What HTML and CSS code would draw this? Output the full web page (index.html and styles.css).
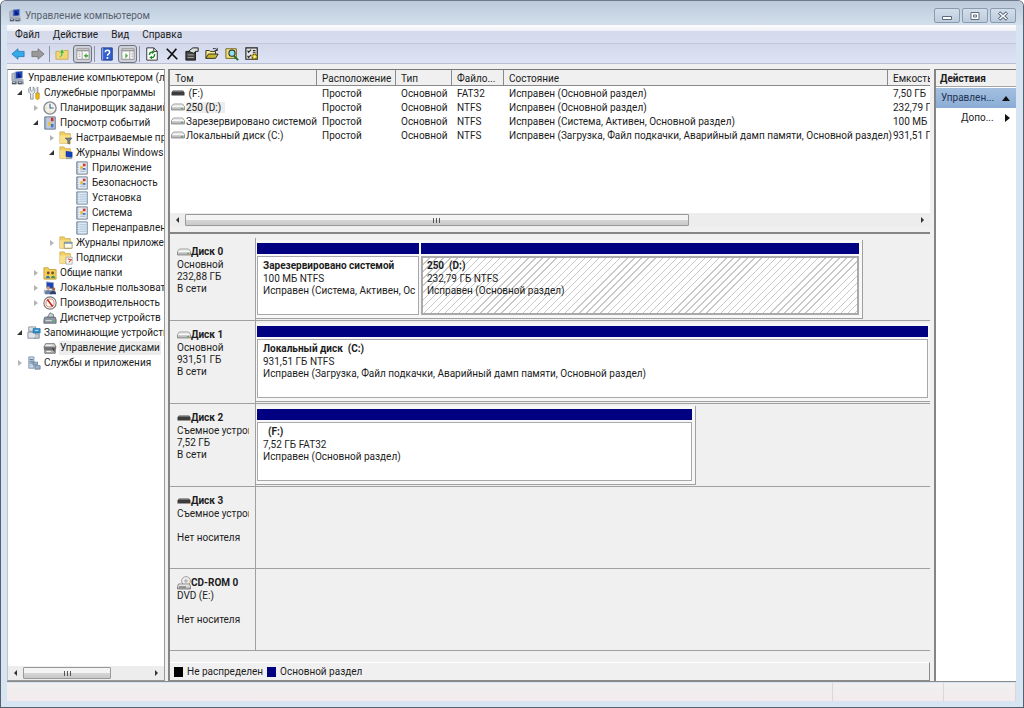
FILE: index.html
```html
<!DOCTYPE html>
<html lang="ru">
<head>
  <meta charset="UTF-8">
  <meta name="viewport" content="width=device-width, initial-scale=1.0">
  <title>Управление компьютером</title>
  <link rel="stylesheet" href="styles.css">
</head>
<body>

  <!-- Icons -->
  <svg class="sprite" aria-hidden="true">
    <linearGradient id="g-disk" x1="0" y1="0" x2="0" y2="1"><stop offset="0" stop-color="#fff"/><stop offset="1" stop-color="#aaa"/></linearGradient>
    <symbol id="i-computer" viewBox="0 0 16 16">
      <path d="M5 1l8-1v8l-8 1z" fill="#1d3fb5" stroke="#8fa2c8" stroke-width=".8"/>
      <path d="M8 2l3 3v3L7 7z" fill="#0c1f78"/>
      <path d="M1 3l3-1v8l-3 1z" fill="#b9bfc9" stroke="#6c7484" stroke-width=".6"/>
      <path d="M3 9h11l1 6H1z" fill="#a9b0bc"/>
      <path d="M1 12h5v3H1zM8 12h5v3H8z" fill="#4c5666"/>
      <path d="M2 13h3M9 13h3" stroke="#dfe4ea"/>
    </symbol>
    <symbol id="i-tools" viewBox="0 0 16 16">
      <path d="M4 1v4l2 1 1-1V1l2 2v4L7 9v6H4V9L2 7V3z" fill="#e6e9ee" stroke="#6d7683" stroke-width=".8"/>
      <path d="M11 1h2v7h-2z" fill="#9ea5ae"/>
      <path d="M10 8h4v6l-2 2-2-2z" fill="#f0b70e" stroke="#a87800" stroke-width=".6"/>
    </symbol>
    <symbol id="i-clock" viewBox="0 0 16 16">
      <circle cx="8" cy="8" r="7" fill="#f3f1e6" stroke="#858d96" stroke-width="1.6"/>
      <path d="M8 3v5h4" fill="none" stroke="#3a5f9c" stroke-width="1.2"/>
      <path d="M3 8h1M8 12v1" stroke="#d2a13a"/>
    </symbol>
    <symbol id="i-event" viewBox="0 0 16 16">
      <path d="M2 1h12v14H2z" fill="#bccadf" stroke="#5a6b85"/>
      <path d="M3 1v14" stroke="#7f8fa6" stroke-width="1.6" stroke-dasharray="1 1"/>
      <path d="M9 2h3v4H9z" fill="#d92b22"/>
      <path d="M6 7h3v4H6z" fill="#eec22e"/>
      <path d="M9 9h3v4H9z" fill="#4d74c4"/>
    </symbol>
    <symbol id="i-log" viewBox="0 0 16 16">
      <path d="M2 1h12v14H2z" fill="#e3eaf2" stroke="#64758c"/>
      <path d="M3 1v14" stroke="#7f8fa6" stroke-width="1.6" stroke-dasharray="1 1"/>
      <path d="M6 10h6M6 12h6" stroke="#a9b8cc"/>
      <path d="M9 3h3v3H9z" fill="#d9342b"/>
      <path d="M6 6h3v3H6z" fill="#e8b92c"/>
      <path d="M9 8h3v2H9z" fill="#4d74c4"/>
    </symbol>
    <symbol id="i-sheet" viewBox="0 0 16 16">
      <path d="M2 1h12v14H2z" fill="#dfeaf4" stroke="#64809c"/>
      <path d="M3 1v14" stroke="#7f8fa6" stroke-width="1.6" stroke-dasharray="1 1"/>
      <path d="M5 4h8M5 6h8M5 8h8M5 10h8M5 12h8" stroke="#a7bfd4" stroke-width=".8"/>
    </symbol>
    <symbol id="i-folder" viewBox="0 0 16 16">
      <path d="M1 1h5l1 2h6v11H1z" fill="#f0cf68" stroke="#c9a03a" stroke-width=".8"/>
      <path d="M1 5h12v9H1z" fill="#f8e08c"/>
    </symbol>
    <symbol id="i-filter" viewBox="0 0 16 16">
      <use href="#i-folder"/>
      <path d="M7 8h8l-3 3v4l-2-1v-3z" fill="#77808c" stroke="#434b56" stroke-width=".6"/>
    </symbol>
    <symbol id="i-winlog" viewBox="0 0 16 16">
      <use href="#i-folder"/>
      <path d="M8 6l7 1v6l-7-1z" fill="#1642c4" stroke="#0e246b" stroke-width=".6"/>
      <path d="M8 13h7v2H8z" fill="#99a1ad"/>
    </symbol>
    <symbol id="i-applog" viewBox="0 0 16 16">
      <use href="#i-folder"/>
      <path d="M6 7h9v7H6z" fill="#fffbe8" stroke="#8a7a45" stroke-width=".8"/>
      <path d="M6 8h9" stroke="#5982bd" stroke-width="1.4"/>
    </symbol>
    <symbol id="i-subs" viewBox="0 0 16 16">
      <use href="#i-folder"/>
      <path d="M8 7h7v8H8z" fill="#fff" stroke="#8996a5" stroke-width=".8"/>
      <path d="M10 9l4 1-3 3" fill="none" stroke="#d54d33" stroke-width="1.2"/>
    </symbol>
    <symbol id="i-shared" viewBox="0 0 16 16">
      <path d="M1 2h5l1 2h8v11H1z" fill="#f1cf59" stroke="#b98f24" stroke-width=".8"/>
      <circle cx="6" cy="8" r="1.6" fill="#754b28"/><circle cx="11" cy="8" r="1.6" fill="#754b28"/>
      <path d="M3 14c0-4 5-4 5 0z" fill="#3575be"/><path d="M9 14c0-4 5-4 5 0z" fill="#3a9a4b"/>
    </symbol>
    <symbol id="i-users" viewBox="0 0 16 16">
      <path d="M4 1l8 1v7l-8-1z" fill="#1f45bd" stroke="#8998b8"/>
      <path d="M1 10h13v4H1z" fill="#aab1bc"/>
      <circle cx="6" cy="8" r="2" fill="#c99b6c"/><path d="M2 15c0-6 8-6 8 0z" fill="#657ba1"/>
      <circle cx="12" cy="9" r="2" fill="#9d6b43"/><path d="M8 15c0-5 7-5 7 0z" fill="#30436b"/>
    </symbol>
    <symbol id="i-perf" viewBox="0 0 16 16">
      <circle cx="8" cy="8" r="7" fill="#fff" stroke="#777" stroke-width="1.3"/>
      <circle cx="8" cy="8" r="4.6" fill="none" stroke="#d9705c" stroke-width="1"/>
      <path d="M5 4l6 8" stroke="#c7230d" stroke-width="1.8"/>
    </symbol>
    <symbol id="i-devices" viewBox="0 0 16 16">
      <path d="M5 7l3-5 4 2v4z" fill="#c8ced5" stroke="#5b6470" stroke-width=".8"/>
      <path d="M2 7h12l1 3v4H1v-4z" fill="#8d96a1" stroke="#4b535d" stroke-width=".8"/>
      <path d="M3 11h7" stroke="#e8ecef"/><path d="M11 11h2" stroke="#43c35a" stroke-width="1.4"/>
    </symbol>
    <symbol id="i-storage" viewBox="0 0 16 16">
      <path d="M2 1h8v5H2zM1 7h8l1 3v4H1z" fill="#dfe3e8" stroke="#69737f" stroke-width=".8"/>
      <path d="M7 3h8v5H7z" fill="#2d93cf" stroke="#17689d" stroke-width=".8"/>
      <path d="M10 9h4v5H8" fill="#c3c9d0" stroke="#69737f" stroke-width=".8"/>
      <path d="M9 5h4" stroke="#d4eefb"/>
    </symbol>
    <symbol id="i-diskmgmt" viewBox="0 0 16 16">
      <path d="M3 3h10l2 4H1z" fill="#d5d5d5" stroke="#555" stroke-width=".8"/>
      <path d="M1 7h14v3H1z" fill="#707070"/>
      <path d="M2 10h12v4H2z" fill="#b3b3b3" stroke="#4c4c4c" stroke-width=".8"/>
      <path d="M4 12h5M3 5h7" stroke="#fafafa"/><path d="M11 8l2 4" stroke="#222"/>
    </symbol>
    <symbol id="i-services" viewBox="0 0 16 16">
      <path d="M2 1h6v13H2z" fill="#c5d3e2" stroke="#6882a0" stroke-width=".8"/>
      <path d="M3 4h4M3 6h4M3 8h4" stroke="#567392"/>
      <path d="M7 7h5v3H7zM9 11h6v4H9z" fill="#9eb4cc" stroke="#53708f" stroke-width=".8"/>
    </symbol>
    <symbol id="i-hdd" viewBox="0 0 14 8">
      <path d="M2.500 1h9l2 2.500V7h-13V3.500z" fill="url(#g-disk)" stroke="#858585" stroke-width=".8"/>
      <path d="M1 3.500h12" stroke="#fff" stroke-width=".8"/>
      <circle cx="11" cy="5.500" r=".8" fill="#3d9a49"/>
    </symbol>
    <symbol id="i-removable" viewBox="0 0 14 8">
      <path d="M2 1.500h10l1.500 2v3H.5v-3z" fill="#3c3c3c"/>
      <path d="M2 2h10" stroke="#aaa" stroke-width=".9"/>
    </symbol>
    <symbol id="i-cdrom" viewBox="0 0 14 14">
      <circle cx="9" cy="5" r="4.400" fill="#ededed" stroke="#8d8d8d" stroke-width=".8"/>
      <circle cx="9" cy="5" r="1.200" fill="#fff" stroke="#777" stroke-width=".7"/>
      <path d="M1.500 8h11l1 2.500V13H.5v-2.500z" fill="url(#g-disk)" stroke="#6f6f6f" stroke-width=".8"/>
      <path d="M2 11h7" stroke="#5f5f5f"/>
    </symbol>
    <symbol id="i-back" viewBox="0 0 16 16">
      <path d="M1 8l7-6v3h7v6H8v3z" fill="#35aae8" stroke="#1a6fae" stroke-width=".8"/>
    </symbol>
    <symbol id="i-forward" viewBox="0 0 16 16">
      <path d="M15 8L8 2v3H1v6h7v3z" fill="#999" stroke="#6c6c6c" stroke-width=".8"/>
    </symbol>
    <symbol id="i-up" viewBox="0 0 16 16">
      <path d="M1 5h5l1-1h8v10H1z" fill="#f5d472" stroke="#c49d35" stroke-width=".8"/>
      <path d="M4 12c4 0 5-3 5-5h2L8 2 5 7h2c0 2-1 3-3 5z" fill="#47b52e" stroke="#f7fbe8" stroke-width=".5"/>
    </symbol>
    <symbol id="i-pane" viewBox="0 0 16 16">
      <path d="M1 2h14v12H1z" fill="#fafafa" stroke="#8c8c8c"/>
      <path d="M1 4h14" stroke="#9a9a9a" stroke-width="2"/>
      <path d="M7 5v9" stroke="#9a9a9a"/>
      <path d="M3 7h2M3 9h2M3 11h2" stroke="#aaa"/>
      <path d="M9 10l3-3v2h2v2h-2v2z" fill="#49a73f"/>
    </symbol>
    <symbol id="i-pane2" viewBox="0 0 16 16">
      <path d="M1 2h14v12H1z" fill="#fafafa" stroke="#8c8c8c"/>
      <path d="M1 4h14" stroke="#9a9a9a" stroke-width="2"/>
      <path d="M10 5v9" stroke="#9a9a9a"/>
      <path d="M12 7h2M12 9h2M12 11h2" stroke="#aaa"/>
      <path d="M8 10L5 7v6z" fill="#49a73f"/>
    </symbol>
    <symbol id="i-help" viewBox="0 0 16 16">
      <path d="M2 1h12v14H2z" fill="#3560d0" stroke="#1c3382"/>
      <path d="M3 1v14" stroke="#a9bcf0"/>
      <path d="M6 6c0-3 5-3 5 0 0 2-2.500 1.800-2.500 4" fill="none" stroke="#fff" stroke-width="1.600"/>
      <path d="M7.500 11.500h2v2h-2z" fill="#fff"/>
    </symbol>
    <symbol id="i-refresh" viewBox="0 0 16 16">
      <path d="M2 1h8l4 4v10H2z" fill="#fff" stroke="#222"/>
      <path d="M10 1v4h4" fill="none" stroke="#222"/>
      <path d="M5 9c0-2 1-3 3-3M11 8c0 2-1 4-3 4" fill="none" stroke="#178a20" stroke-width="1.500"/>
      <path d="M8 4l3 2-3 2zM8 10l-3 2 3 2z" fill="#178a20"/>
    </symbol>
    <symbol id="i-delete" viewBox="0 0 16 16">
      <path d="M2 2l12 12M13 2L3 14" stroke="#111" stroke-width="2"/>
    </symbol>
    <symbol id="i-props" viewBox="0 0 16 16">
      <path d="M1 5h11v10H1z" fill="#444" stroke="#111"/>
      <path d="M3 9h7M3 12h7" stroke="#aaa"/>
      <path d="M5 4l4-3h6v4h-3l-2 2-4-1z" fill="#ddd" stroke="#111"/>
    </symbol>
    <symbol id="i-open" viewBox="0 0 16 16">
      <path d="M1 13V4h4l1 1h6v3" fill="#f7e78a" stroke="#222"/>
      <path d="M1 13l3-5h11l-3 5z" fill="#c9b52e" stroke="#222"/>
      <path d="M9 2c2-1 4 0 5 2M14 1v3h-3" fill="none" stroke="#222"/>
    </symbol>
    <symbol id="i-search" viewBox="0 0 16 16">
      <path d="M1 2h12v11H1z" fill="#f3df79" stroke="#6b5c18"/>
      <circle cx="8" cy="7" r="3.500" fill="#8fe0ee" stroke="#222" stroke-width="1.200"/>
      <path d="M10 10l5 5" stroke="#1b7434" stroke-width="2.200"/>
    </symbol>
    <symbol id="i-settings" viewBox="0 0 16 16">
      <path d="M1 1h13v13H1z" fill="#e5e5e5" stroke="#222" stroke-width="1.300"/>
      <path d="M3 4l1 2 3-3M3 10l1 2 3-3M9 4h3M9 6h3" fill="none" stroke="#222" stroke-width="1.200"/>
      <circle cx="11" cy="11" r="3" fill="#e3c322" stroke="#5d4d00" stroke-dasharray="1.500 .8" stroke-width="1.500"/>
      <circle cx="11" cy="11" r="1" fill="#fff"/>
    </symbol>
  </svg>

  <div class="window">

    <!-- Title -->
    <header class="title-bar">
      <svg class="icon"><use href="#i-computer"/></svg>
      <h1>Управление компьютером</h1>
      <div class="window-buttons">
        <button aria-label="Свернуть"><svg viewBox="0 0 12 10"><path d="M1.500 5.500h9v3h-9z" fill="#fff" stroke="#5c6b7e"/></svg></button>
        <button aria-label="Развернуть"><svg viewBox="0 0 12 10"><path d="M2 1.500h8v7H2z" fill="#fff" stroke="#5c6b7e"/><path d="M4.500 4h3v2h-3z" fill="none" stroke="#5c6b7e"/></svg></button>
        <button aria-label="Закрыть"><svg viewBox="0 0 12 10"><path d="M2 1.500l8 7M10 1.500l-8 7" stroke="#5c6b7e" stroke-width="3.400"/><path d="M2.500 2l7 6M9.500 2l-7 6" stroke="#fff" stroke-width="1.500"/></svg></button>
      </div>
    </header>

    <!-- Menu -->
    <nav class="menu-bar">
      <button>Файл</button>
      <button>Действие</button>
      <button>Вид</button>
      <button>Справка</button>
    </nav>

    <div class="toolbar">
      <button aria-label="Назад"><svg class="icon"><use href="#i-back"/></svg></button>
      <button aria-label="Вперед"><svg class="icon"><use href="#i-forward"/></svg></button>
      <span class="sep"></span>
      <button aria-label="Вверх"><svg class="icon"><use href="#i-up"/></svg></button>
      <button class="pressed" aria-label="Дерево консоли"><svg class="icon"><use href="#i-pane"/></svg></button>
      <span class="sep"></span>
      <button aria-label="Справка"><svg class="icon"><use href="#i-help"/></svg></button>
      <button class="pressed" aria-label="Панель действий"><svg class="icon"><use href="#i-pane2"/></svg></button>
      <span class="sep"></span>
      <button aria-label="Обновить"><svg class="icon"><use href="#i-refresh"/></svg></button>
      <button aria-label="Удалить"><svg class="icon"><use href="#i-delete"/></svg></button>
      <button aria-label="Свойства"><svg class="icon"><use href="#i-props"/></svg></button>
      <button aria-label="Открыть"><svg class="icon"><use href="#i-open"/></svg></button>
      <button aria-label="Найти"><svg class="icon"><use href="#i-search"/></svg></button>
      <button aria-label="Параметры"><svg class="icon"><use href="#i-settings"/></svg></button>
    </div>

    <main class="panes">

      <!-- Console tree -->
      <section class="tree-pane">
        <ul class="tree">
          <li class="root"><div class="node"><svg class="icon"><use href="#i-computer"/></svg><span>Управление компьютером (локальным)</span></div>
            <ul>
              <li><div class="node"><button class="twisty open" aria-label="Свернуть"></button><svg class="icon"><use href="#i-tools"/></svg><span>Служебные программы</span></div>
                <ul>
                  <li><div class="node"><button class="twisty" aria-label="Развернуть"></button><svg class="icon"><use href="#i-clock"/></svg><span>Планировщик заданий</span></div></li>
                  <li><div class="node"><button class="twisty open" aria-label="Свернуть"></button><svg class="icon"><use href="#i-event"/></svg><span>Просмотр событий</span></div>
                    <ul>
                      <li><div class="node"><button class="twisty" aria-label="Развернуть"></button><svg class="icon"><use href="#i-filter"/></svg><span>Настраиваемые представления</span></div></li>
                      <li><div class="node"><button class="twisty open" aria-label="Свернуть"></button><svg class="icon"><use href="#i-winlog"/></svg><span>Журналы Windows</span></div>
                        <ul>
                          <li><div class="node leaf"><svg class="icon"><use href="#i-log"/></svg><span>Приложение</span></div></li>
                          <li><div class="node leaf"><svg class="icon"><use href="#i-log"/></svg><span>Безопасность</span></div></li>
                          <li><div class="node leaf"><svg class="icon"><use href="#i-sheet"/></svg><span>Установка</span></div></li>
                          <li><div class="node leaf"><svg class="icon"><use href="#i-log"/></svg><span>Система</span></div></li>
                          <li><div class="node leaf"><svg class="icon"><use href="#i-sheet"/></svg><span>Перенаправленные события</span></div></li>
                        </ul>
                      </li>
                      <li><div class="node"><button class="twisty" aria-label="Развернуть"></button><svg class="icon"><use href="#i-applog"/></svg><span>Журналы приложений и служб</span></div></li>
                      <li><div class="node leaf"><svg class="icon"><use href="#i-subs"/></svg><span>Подписки</span></div></li>
                    </ul>
                  </li>
                  <li><div class="node"><button class="twisty" aria-label="Развернуть"></button><svg class="icon"><use href="#i-shared"/></svg><span>Общие папки</span></div></li>
                  <li><div class="node"><button class="twisty" aria-label="Развернуть"></button><svg class="icon"><use href="#i-users"/></svg><span>Локальные пользователи</span></div></li>
                  <li><div class="node"><button class="twisty" aria-label="Развернуть"></button><svg class="icon"><use href="#i-perf"/></svg><span>Производительность</span></div></li>
                  <li><div class="node leaf"><svg class="icon"><use href="#i-devices"/></svg><span>Диспетчер устройств</span></div></li>
                </ul>
              </li>
              <li><div class="node"><button class="twisty open" aria-label="Свернуть"></button><svg class="icon"><use href="#i-storage"/></svg><span>Запоминающие устройства</span></div>
                <ul>
                  <li><div class="node leaf"><svg class="icon"><use href="#i-diskmgmt"/></svg><span class="selected">Управление дисками</span></div></li>
                </ul>
              </li>
              <li><div class="node"><button class="twisty" aria-label="Развернуть"></button><svg class="icon"><use href="#i-services"/></svg><span>Службы и приложения</span></div></li>
            </ul>
          </li>
        </ul>
        <div class="scrollbar tree-scroll">
          <button class="arrow left" aria-label="Влево"></button>
          <div class="track"><div class="thumb" style="width: 70%"></div></div>
          <button class="arrow right" aria-label="Вправо"></button>
        </div>
      </section>

      <!-- Volumes and disks -->
      <section class="center-pane">
        <div class="volumes">
          <table>
            <colgroup>
              <col class="c-name"><col class="c-layout"><col class="c-type"><col class="c-fs"><col class="c-state"><col>
            </colgroup>
            <thead>
              <tr><th>Том</th><th>Расположение</th><th>Тип</th><th>Файло...</th><th>Состояние</th><th>Емкость</th></tr>
            </thead>
            <tbody>
              <tr><td><svg class="drive"><use href="#i-removable"/></svg><span>&nbsp;(F:)</span></td><td>Простой</td><td>Основной</td><td>FAT32</td><td class="state">Исправен (Основной раздел)</td><td>7,50 ГБ</td></tr>
              <tr><td><svg class="drive"><use href="#i-hdd"/></svg><span class="selected">250 (D:)</span></td><td>Простой</td><td>Основной</td><td>NTFS</td><td class="state">Исправен (Основной раздел)</td><td>232,79 ГБ</td></tr>
              <tr><td><svg class="drive"><use href="#i-hdd"/></svg><span>Зарезервировано системой</span></td><td>Простой</td><td>Основной</td><td>NTFS</td><td class="state">Исправен (Система, Активен, Основной раздел)</td><td>100 МБ</td></tr>
              <tr><td><svg class="drive"><use href="#i-hdd"/></svg><span>Локальный диск (C:)</span></td><td>Простой</td><td>Основной</td><td>NTFS</td><td class="state">Исправен (Загрузка, Файл подкачки, Аварийный дамп памяти, Основной раздел)</td><td>931,51 ГБ</td></tr>
            </tbody>
          </table>
          <div class="scrollbar">
            <button class="arrow left" aria-label="Влево"></button>
            <div class="track"><div class="thumb" style="width: 69%"></div></div>
            <button class="arrow right" aria-label="Вправо"></button>
          </div>
        </div>

        <div class="disks">
          <div class="disk">
            <div class="disk-info">
              <h2><svg class="drive"><use href="#i-hdd"/></svg>Диск 0</h2>
              <p>Основной</p><p>232,88 ГБ</p><p>В сети</p>
            </div>
            <div class="disk-map">
              <div class="partitions" style="width: 90%">
                <div class="partition" style="width: 27%"><div class="part-body"><h3>Зарезервировано системой</h3><p>100 МБ NTFS</p><p>Исправен (Система, Активен, Ос</p></div></div>
                <div class="partition current" style="width: 73%"><div class="part-body"><h3>250 &nbsp;(D:)</h3><p>232,79 ГБ NTFS</p><p>Исправен (Основной раздел)</p></div></div>
              </div>
            </div>
          </div>
          <div class="disk">
            <div class="disk-info">
              <h2><svg class="drive"><use href="#i-hdd"/></svg>Диск 1</h2>
              <p>Основной</p><p>931,51 ГБ</p><p>В сети</p>
            </div>
            <div class="disk-map">
              <div class="partitions full" style="width: 100%">
                <div class="partition" style="width: 100%"><div class="part-body"><h3>Локальный диск &nbsp;(C:)</h3><p>931,51 ГБ NTFS</p><p>Исправен (Загрузка, Файл подкачки, Аварийный дамп памяти, Основной раздел)</p></div></div>
              </div>
            </div>
          </div>
          <div class="disk">
            <div class="disk-info">
              <h2><svg class="drive"><use href="#i-removable"/></svg>Диск 2</h2>
              <p>Съемное устройство</p><p>7,52 ГБ</p><p>В сети</p>
            </div>
            <div class="disk-map">
              <div class="partitions" style="width: 65.3%">
                <div class="partition" style="width: 100%"><div class="part-body"><h3>&nbsp;&nbsp;(F:)</h3><p>7,52 ГБ FAT32</p><p>Исправен (Основной раздел)</p></div></div>
              </div>
            </div>
          </div>
          <div class="disk no-media">
            <div class="disk-info">
              <h2><svg class="drive"><use href="#i-removable"/></svg>Диск 3</h2>
              <p>Съемное устройство</p><p>&nbsp;</p><p>Нет носителя</p>
            </div>
            <div class="disk-map"></div>
          </div>
          <div class="disk no-media">
            <div class="disk-info">
              <h2><svg class="drive cd"><use href="#i-cdrom"/></svg>CD-ROM 0</h2>
              <p>DVD (E:)</p><p>&nbsp;</p><p>Нет носителя</p>
            </div>
            <div class="disk-map"></div>
          </div>
        </div>

        <div class="legend">
          <span class="swatch unallocated"></span><span>Не распределен</span>
          <span class="swatch primary"></span><span>Основной раздел</span>
        </div>
      </section>

      <!-- Actions -->
      <aside class="actions-pane">
        <h2>Действия</h2>
        <button class="group"><span>Управлен...</span><i class="tri up"></i></button>
        <button class="more"><span>Допо...</span><i class="tri next"></i></button>
      </aside>
    </main>

    <footer class="status-bar">
      <span></span><span></span><span></span>
    </footer>
  </div>

</body>
</html>
```

FILE: styles.css
```css
* {
  box-sizing: border-box;
}

body {
  margin: 0;
  font-family: Roboto, "Noto Sans", sans-serif;
  font-size: 10px;
  line-height: 14px;
  color: #1c1c1c;
}

h1, h2, h3, p, ul {
  margin: 0;
  padding: 0;
  font-size: inherit;
}

ul {
  list-style: none;
}

button {
  margin: 0;
  padding: 0;
  border: none;
  background: none;
  font: inherit;
  color: inherit;
}

.sprite {
  position: absolute;
  width: 0;
  height: 0;
}

.icon {
  width: 14px;
  height: 14px;
  flex: none;
}

.window {
  display: flex;
  flex-direction: column;
  min-height: 100vh;
  padding: 0 7px 6px 6px;
  border: 1px solid #56606e;
  border-top-color: #6d7a8a;
  border-radius: 6px 6px 0 0;
  background: #d7e4f2;
}

/* Title bar */
.title-bar {
  display: flex;
  align-items: center;
  height: 24px;
  margin: 0 -7px 0 -6px;
  padding: 5px 7px 0 8px;
  gap: 3px;
  border-radius: 5px 5px 0 0;
  background: linear-gradient(#bccada, #d3dfec);
  color: #57616e;
}

.title-bar .icon {
  width: 13px;
  height: 13px;
}

.title-bar h1 {
  flex: 1;
  font-weight: normal;
}

.window-buttons {
  display: flex;
  gap: 2px;
}

.window-buttons button {
  display: flex;
  align-items: center;
  justify-content: center;
  width: 26px;
  height: 15px;
  border: 1px solid #8a9bb0;
  border-radius: 2px;
  background: linear-gradient(#d3deea, #bccbdc);
}

.window-buttons svg {
  width: 12px;
  height: 10px;
}

/* Menu */
.menu-bar {
  display: flex;
  height: 19px;
  padding: 1px 0 0 8px;
  gap: 13px;
  border-bottom: 1px solid #c3c8d8;
  background: linear-gradient(#fdfdfe 0, #eef0f8 35%, #d5daeb 36%, #d8ddef);
}

/* Toolbar */
.toolbar {
  display: flex;
  align-items: center;
  height: 20px;
  padding-left: 1px;
  gap: 1px;
  border-bottom: 1px solid #b9bed0;
  background: linear-gradient(#d3d8ea, #dfe3f6);
}

.toolbar button {
  display: flex;
  align-items: center;
  justify-content: center;
  width: 19px;
  height: 18px;
}

.toolbar button.pressed {
  margin-left: 1px;
  border: 1px solid #6e7380;
  border-radius: 3px;
  background: #cdd0d9;
}

.toolbar .sep {
  width: 1px;
  height: 16px;
  margin: 0 1px;
  background: #8f93a0;
}

/* Panes */
.panes {
  flex: 1;
  display: grid;
  grid-template-columns: 158px minmax(0, 1fr) 82px;
  gap: 3px;
  padding-top: 5px;
  background: #f0f0f0;
  border-bottom: 1px solid #8a8a8a;
}

.tree-pane,
.center-pane,
.actions-pane {
  display: flex;
  flex-direction: column;
  min-width: 0;
  border-top: 1px solid #777;
}

.tree-pane {
  border-right: 1px solid #999;
  border-bottom: 1px solid #999;
  border-left: 1px solid #c4c4c4;
  background: #fff;
}

.tree {
  flex: 1;
  overflow: hidden;
}

.tree ul {
  padding-left: 16px;
}

.tree .root > ul {
  padding-left: 4px;
}

.node {
  display: flex;
  align-items: center;
  height: 15px;
  white-space: nowrap;
}

.node .icon {
  margin-right: 2px;
}

.node span {
  flex: none;
  padding: 0 1px;
}

.root > .node {
  padding-left: 3px;
}

.leaf {
  padding-left: 15px;
}

.twisty {
  display: flex;
  flex: none;
  align-items: center;
  justify-content: center;
  width: 15px;
  height: 15px;
}

.twisty::before {
  content: "";
  border: solid transparent;
  border-width: 3px 0 3px 4px;
  border-left-color: #b5b5b5;
}

.twisty.open::before {
  border-width: 0 0 5px 5px;
  border-color: transparent transparent #333;
}

.selected {
  background: #ededed;
}

/* Scrollbars */
.scrollbar {
  display: flex;
  height: 14px;
  background: #ededed;
}

.arrow {
  display: flex;
  align-items: center;
  justify-content: center;
  width: 15px;
  height: 14px;
}

.arrow::before {
  content: "";
  border: solid transparent;
  border-width: 3px 3px 3px 0;
  border-right-color: #333;
}

.arrow.right::before {
  border-width: 3px 0 3px 3px;
  border-left-color: #333;
}

.track {
  flex: 1;
  padding: 1px 0;
}

.thumb {
  display: flex;
  align-items: center;
  justify-content: center;
  height: 12px;
  border: 1px solid #999;
  border-radius: 1px;
  background: linear-gradient(#f4f4f4 45%, #d6d6d6 50%, #c9c9c9);
}

.thumb::before {
  content: "";
  width: 7px;
  height: 5px;
  background: repeating-linear-gradient(90deg, #555 0 1px, transparent 1px 3px);
}

/* Volume list */
.center-pane {
  margin-right: 1px;
  border-left: 2px solid #858585;
  border-bottom: 1px solid #8a8a8a;
}

.volumes {
  display: flex;
  flex-direction: column;
  justify-content: space-between;
  height: 164px;
  padding-bottom: 5px;
  border-bottom: 2px solid #858585;
  background: linear-gradient(#fff, #fff) no-repeat 0 0 / 100% 144px #f0f0f0;
  overflow: hidden;
}

.volumes table {
  width: 100%;
  table-layout: fixed;
  border-spacing: 0;
}

.c-name { width: 147px; }
.c-layout { width: 79px; }
.c-type { width: 56px; }
.c-fs { width: 52px; }
.c-state { width: 384px; }

.volumes th,
.volumes td {
  height: 14px;
  padding: 2px 0 0 5px;
  line-height: 12px;
  text-align: left;
  font-weight: normal;
  white-space: nowrap;
  overflow: hidden;
}

.volumes th {
  height: 16px;
  border-right: 1px solid #8a8a8a;
  border-bottom: 1px solid #8a8a8a;
  background: #f0f0f0;
}

.volumes th:last-child {
  border-right: none;
}

.volumes td:first-child {
  padding-left: 1px;
}

.volumes td:first-child span {
  padding-right: 4px;
}

.volumes .state {
  overflow: visible;
}

.drive {
  width: 14px;
  height: 8px;
  margin-right: 1px;
}

.drive.cd {
  height: 14px;
}

/* Disks */
.disks {
  flex: 1;
  padding-top: 4px;
}

.disk {
  display: flex;
  height: 83px;
  border-bottom: 1px solid #a0a0a0;
}

.disk.no-media {
  height: 82px;
}

.disk-info {
  flex: none;
  width: 86px;
  padding: 7px 6px 0 7px;
  border-right: 1px solid #a0a0a0;
  line-height: 12px;
  white-space: nowrap;
}

.disk-info h2 {
  display: flex;
  align-items: center;
  height: 14px;
  font-weight: bold;
}

.disk-info h2 .drive {
  flex: none;
  margin-right: 0;
}

.disk-info p {
  overflow: hidden;
}

.disk-map {
  flex: 1;
  min-width: 0;
  padding-top: 2px;
}

.partitions {
  display: flex;
  gap: 2px;
  height: 79px;
  padding: 3px 3px 3px 1px;
  border-right: 1px solid #a0a0a0;
  border-bottom: 1px solid #a0a0a0;
  background: #f7f7f7;
}

.partitions.full {
  padding-right: 2px;
  border-right: none;
}

.partition {
  display: flex;
  flex-direction: column;
  min-width: 0;
  border-top: 11px solid #000080;
}

.part-body {
  flex: 1;
  margin-top: 2px;
  padding: 2px 5px;
  border: 1px solid #a8a8a8;
  background: #fff;
  line-height: 12px;
  white-space: nowrap;
  overflow: hidden;
}

.part-body h3 {
  line-height: 14px;
}

.current .part-body {
  border: 2px solid #aaa;
  padding: 1px 4px;
  background: repeating-linear-gradient(135deg, #fff 0 4px, #c8c8c8 4px 5px);
}

.legend {
  display: flex;
  align-items: center;
  height: 18px;
  padding-left: 4px;
  gap: 4px;
  border-top: 1px solid #fff;
  border-right: 1px solid #8a8a8a;
}

.swatch {
  width: 9px;
  height: 10px;
}

.unallocated { background: #000; }
.primary { background: #000080; }

/* Actions */
.actions-pane {
  border-left: 2px solid #858585;
  background: #fff;
}

.actions-pane h2 {
  height: 17px;
  padding: 2px 4px 0;
  border-bottom: 1px solid #a5a5a5;
  background: #f0f0f0;
}

.actions-pane button {
  display: flex;
  align-items: center;
  justify-content: space-between;
  height: 20px;
  padding: 0 6px 0 5px;
}

.actions-pane .group {
  margin-top: 1px;
  background: linear-gradient(#a3bfe0, #8badd6);
  color: #1d3250;
}

.actions-pane .more {
  padding-left: 25px;
}

.tri {
  border: solid transparent;
}

.tri.up {
  border-width: 0 4px 5px;
  border-bottom-color: #111;
}

.tri.next {
  border-width: 4px 0 4px 5px;
  border-left-color: #111;
}

/* Status bar */
.status-bar {
  display: grid;
  grid-template-columns: minmax(0, 1fr) 111px 72px;
  height: 18px;
  margin-top: 1px;
  background: linear-gradient(#f0efef, #f3ebed);
}

.status-bar span {
  border-right: 1px solid #dcd6d6;
}
```
